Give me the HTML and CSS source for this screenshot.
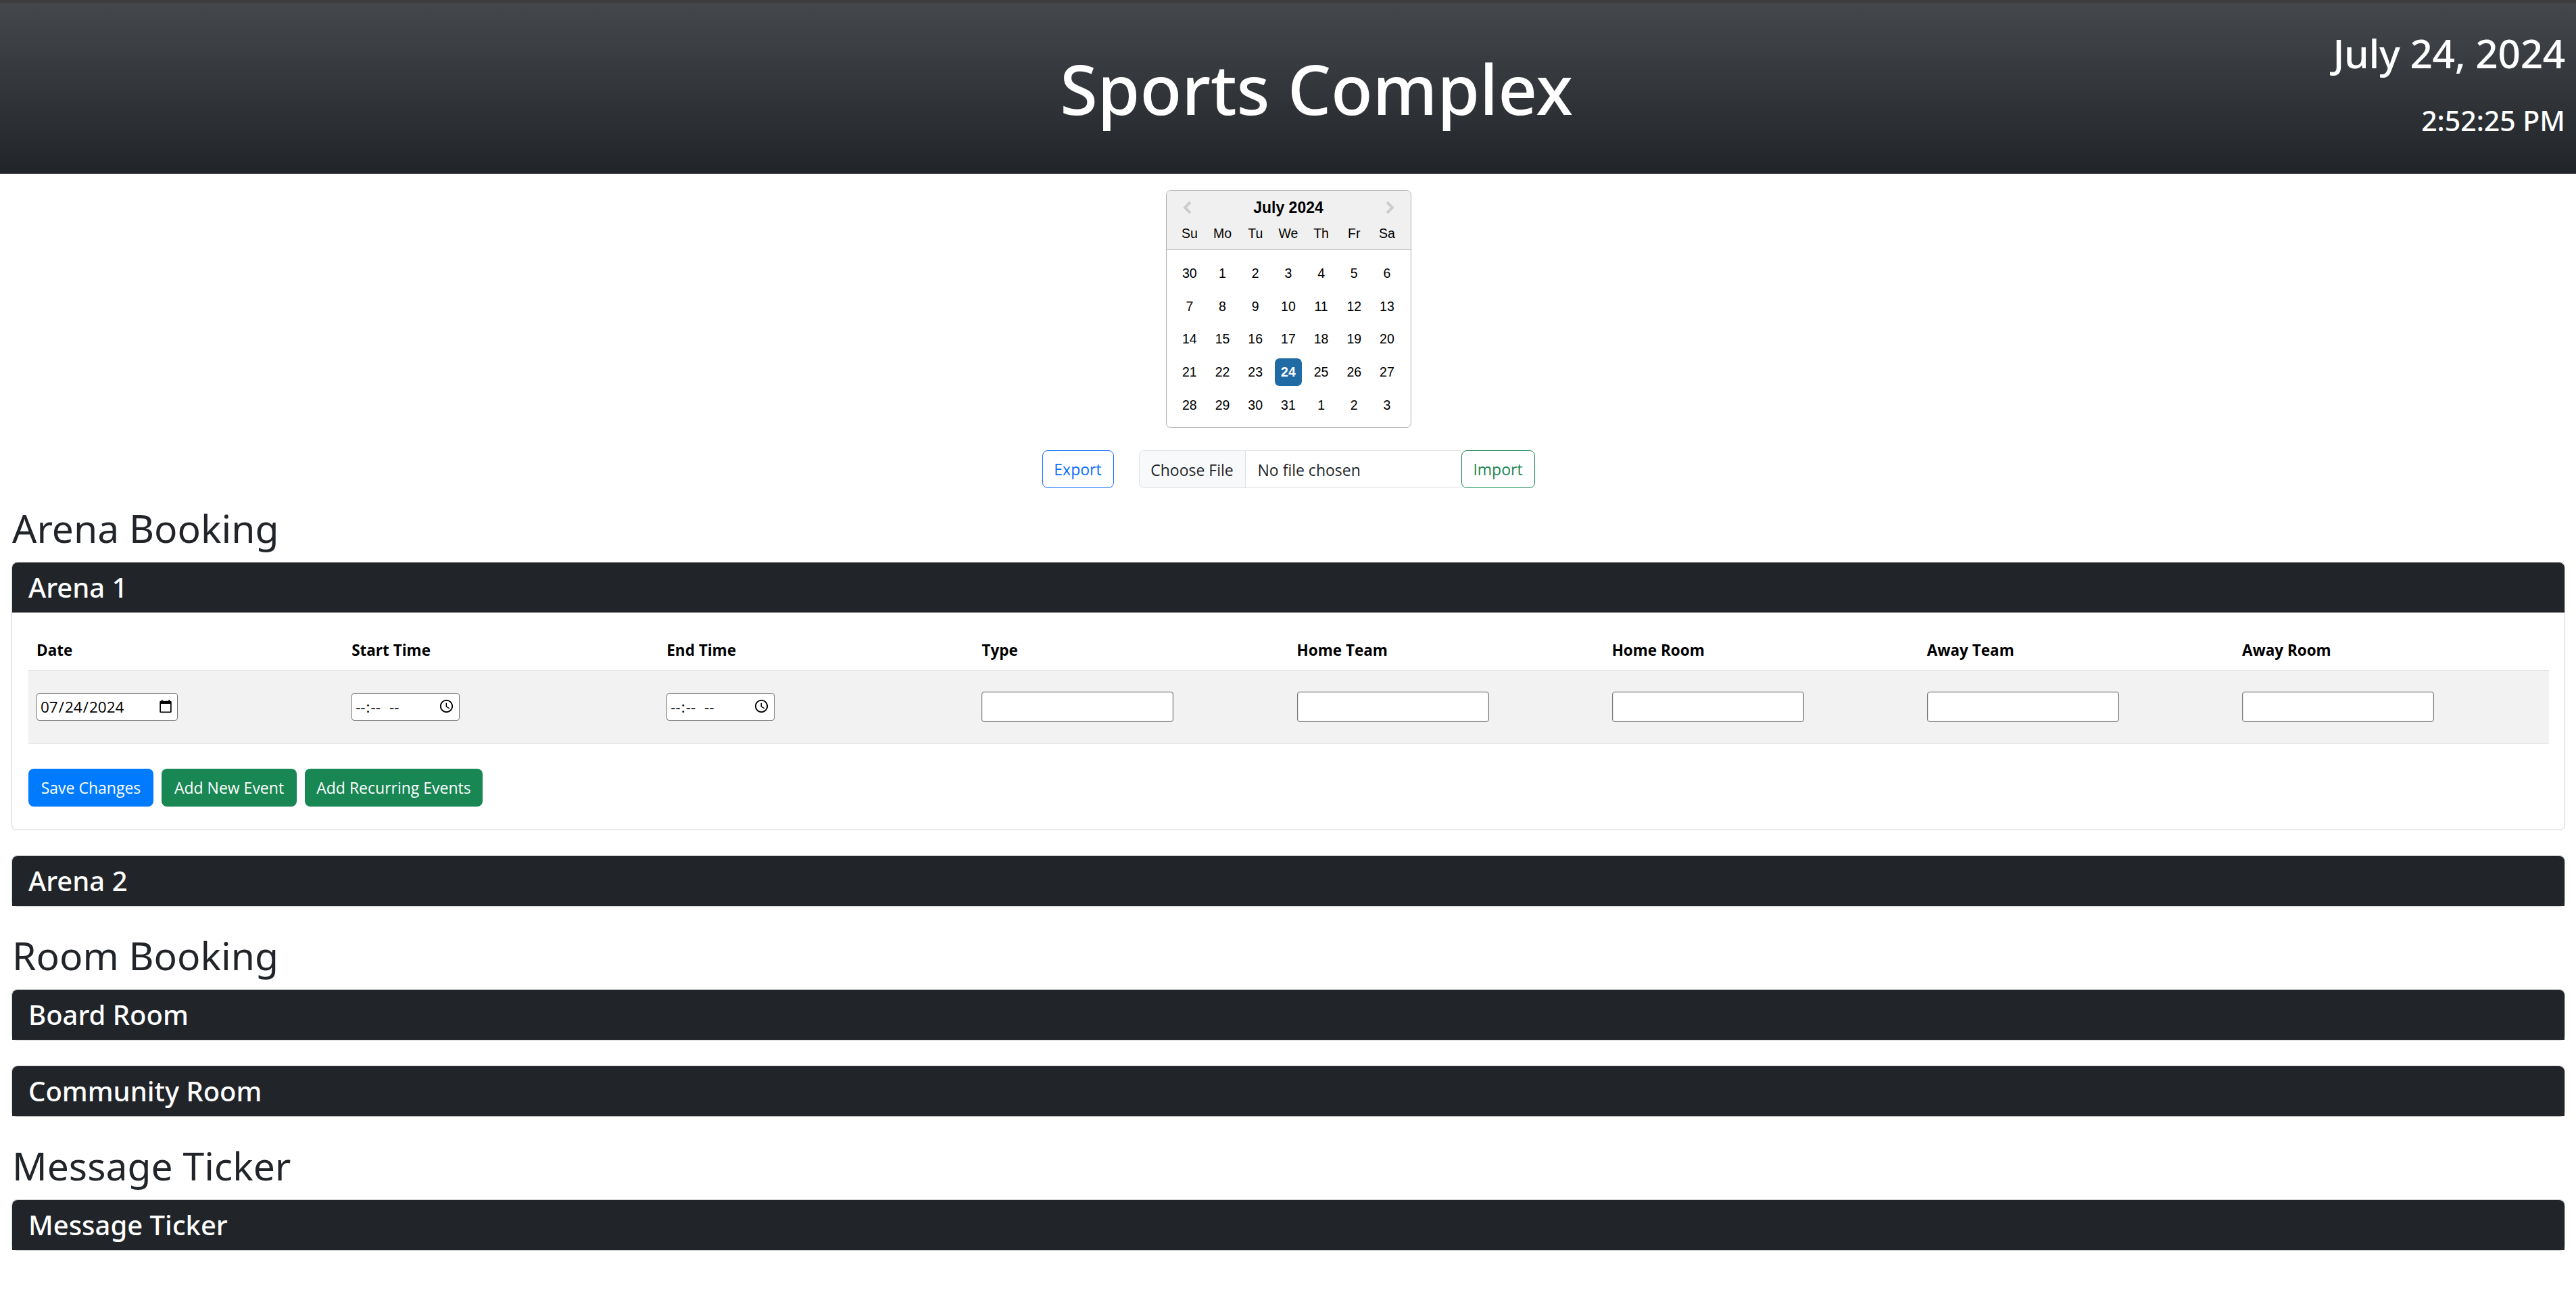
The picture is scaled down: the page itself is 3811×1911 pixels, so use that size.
FILE: index.html
```html
<!DOCTYPE html>
<html>
<head>
	<title>Sports Complex</title>
	<meta charset="utf-8">
	<link rel="stylesheet" href="styles.css">
</head>
<body>
	<header class="banner">
		<h1 class="banner-title">Sports Complex</h1>
		<div class="clock">
			<div class="clock-date">July 24, 2024</div>
			<div class="clock-time">2:52:25 PM</div>
		</div>
	</header>

	<div class="calendar-wrap">
		<div class="calendar">
			<div class="calendar-head">
				<div class="calendar-month">
					<svg class="chevron" viewBox="0 0 14 20"><path d="M11 2 3 10l8 8"/></svg>
					<span>July 2024</span>
					<svg class="chevron" viewBox="0 0 14 20"><path d="M3 2l8 8-8 8"/></svg>
				</div>
				<div class="calendar-row">
					<span>Su</span><span>Mo</span><span>Tu</span><span>We</span><span>Th</span><span>Fr</span><span>Sa</span>
				</div>
			</div>
			<div class="calendar-body">
				<div class="calendar-row"><span>30</span><span>1</span><span>2</span><span>3</span><span>4</span><span>5</span><span>6</span></div>
				<div class="calendar-row"><span>7</span><span>8</span><span>9</span><span>10</span><span>11</span><span>12</span><span>13</span></div>
				<div class="calendar-row"><span>14</span><span>15</span><span>16</span><span>17</span><span>18</span><span>19</span><span>20</span></div>
				<div class="calendar-row"><span>21</span><span>22</span><span>23</span><span class="selected">24</span><span>25</span><span>26</span><span>27</span></div>
				<div class="calendar-row"><span>28</span><span>29</span><span>30</span><span>31</span><span>1</span><span>2</span><span>3</span></div>
			</div>
		</div>
	</div>

	<div class="transfer">
		<button class="btn btn-outline-blue">Export</button>
		<div class="import-group">
			<input class="file-input" type="file">
			<button class="btn btn-outline-green">Import</button>
		</div>
	</div>

	<main class="content">
		<h2 class="section-title">Arena Booking</h2>
		<section class="card">
			<div class="card-header">Arena 1</div>
			<div class="card-body">
				<table class="events">
					<tr>
						<th>Date</th><th>Start Time</th><th>End Time</th><th>Type</th>
						<th>Home Team</th><th>Home Room</th><th>Away Team</th><th>Away Room</th>
					</tr>
					<tr>
						<td><input class="field-date" type="date" value="2024-07-24"></td>
						<td><input class="field-time" type="time"></td>
						<td><input class="field-time" type="time"></td>
						<td><input class="field-text" type="text"></td>
						<td><input class="field-text" type="text"></td>
						<td><input class="field-text" type="text"></td>
						<td><input class="field-text" type="text"></td>
						<td><input class="field-text" type="text"></td>
					</tr>
				</table>
				<div class="actions">
					<button class="btn btn-blue">Save Changes</button>
					<button class="btn btn-green">Add New Event</button>
					<button class="btn btn-green">Add Recurring Events</button>
				</div>
			</div>
		</section>
		<section class="card"><div class="card-header">Arena 2</div></section>

		<h2 class="section-title">Room Booking</h2>
		<section class="card"><div class="card-header">Board Room</div></section>
		<section class="card"><div class="card-header">Community Room</div></section>

		<h2 class="section-title">Message Ticker</h2>
		<section class="card"><div class="card-header">Message Ticker</div></section>
	</main>
</body>
</html>
```

FILE: styles.css
```css
*{
	box-sizing: border-box;
}

body{
	margin: 0;
	font-family: "Open Sans", sans-serif;
	font-size: 24px;
	color: #212529;
	background: #fff;
}

/* top banner */
.banner{
	display: flex;
	align-items: flex-start;
	height: 257px;
	border-top: 5px solid #3d3d3d;
	background: linear-gradient(#44484c, #212529);
	color: #fff;
	font-family: "Noto Sans", sans-serif;
}

.banner-title{
	flex: 1;
	margin: 0;
	padding: 58px 0 0 444px;
	text-align: center;
	font-size: 101px;
	line-height: 1.35;
	font-weight: 500;
}

.clock{
	padding: 38px 16px 0 0;
	text-align: right;
}

.clock-date{
	font-size: 58.5px;
	line-height: 70px;
	font-weight: 500;
	letter-spacing: -0.3px;
}

.clock-time{
	margin-top: 40px;
	font-size: 41px;
	line-height: 50px;
	font-weight: 500;
}

/* month picker */
.calendar-wrap{
	display: flex;
	justify-content: center;
	margin-top: 24px;
	padding-left: 1px;
}

.calendar{
	width: 363px;
	height: 352px;
	border: 1px solid #aeaeae;
	border-radius: 7px;
	font-family: "Liberation Sans", sans-serif;
	font-size: 19.5px;
	color: #000;
}

.calendar-head{
	height: 88px;
	padding: 0 10px;
	background: #f0f0f0;
	border-bottom: 1px solid #aeaeae;
	border-radius: 7px 7px 0 0;
}

.calendar-month{
	display: flex;
	align-items: center;
	justify-content: space-between;
	height: 50px;
	padding: 0 14px;
	font-size: 23px;
	font-weight: bold;
}

.chevron{
	width: 14px;
	height: 20px;
	fill: none;
	stroke: #ccc;
	stroke-width: 4;
}

.calendar-row{
	display: grid;
	grid-template-columns: repeat(7, 48.7px);
	text-align: center;
	line-height: 26px;
}

.calendar-body{
	padding: 10px 10px 0;
}

.calendar-body .calendar-row{
	height: 48.7px;
	align-items: center;
}

.calendar-body span{
	line-height: 41px;
	margin: 0 4px;
}

.calendar-body .selected{
	background: #216ba5;
	border-radius: 7px;
	color: #fff;
	font-weight: bold;
}

/* export and import */
.transfer{
	display: flex;
	justify-content: center;
	gap: 37px;
	margin: 33px 0 0;
	padding-left: 1px;
}

.import-group{
	display: flex;
}

.btn{
	height: 56px;
	padding: 0;
	border: 1px solid transparent;
	border-radius: 8px;
	font-family: "Open Sans", sans-serif;
	font-size: 23px;
	background: none;
}

.btn-outline-blue{
	width: 106px;
	border-color: #0d6efd;
	color: #0d6efd;
}

.btn-outline-green{
	width: 109px;
	margin-left: 1px;
	border-color: #198754;
	color: #198754;
}

.btn-blue{
	background: #007bff;
	color: #fff;
}

.btn-green{
	background: #198754;
	color: #fff;
}

.file-input{
	width: 476px;
	height: 56px;
	padding: 0;
	border: 1px solid #dee2e6;
	border-right: 0;
	border-radius: 8px 0 0 8px;
	font-family: "Open Sans", sans-serif;
	font-size: 23px;
	color: #212529;
}

.file-input::file-selector-button{
	width: 157px;
	height: 56px;
	margin: 0 18px 0 0;
	padding: 0;
	border: 0;
	border-right: 1px solid #dee2e6;
	background: #f8f9fa;
	color: #212529;
	font: inherit;
}

/* booking sections */
.content{
	padding: 0 16px 0 17px;
}

.section-title{
	margin: 0 0 14px;
	padding-left: 1px;
	font-family: "Noto Sans", sans-serif;
	font-size: 57px;
	line-height: 71px;
	font-weight: 400;
}

.section-title:first-child{
	margin-top: 24px;
}

.card{
	margin-bottom: 37px;
	border: 1px solid #d0d0d0;
	border-radius: 8px;
}

.card-header{
	height: 74px;
	padding: 0 24px;
	background: #212529;
	border-radius: 8px 8px 0 0;
	color: #fff;
	font-family: "Noto Sans", sans-serif;
	font-size: 40px;
	line-height: 73px;
	font-weight: 500;
}

.card-body{
	padding: 25px 23px 34px 24px;
}

.events{
	width: 100%;
	border-collapse: collapse;
	table-layout: fixed;
	color: #000;
}

.events th{
	height: 60px;
	padding: 2px 12px 0;
	text-align: left;
	font-size: 22.5px;
	font-weight: bold;
}

.events td{
	height: 108px;
	padding: 0 12px;
	background: #f2f2f2;
	border-top: 1px solid #e2e2e2;
	border-bottom: 1px solid #e2e2e2;
}

.events input{
	display: block;
	background: #fff;
	color: #000;
	font-family: "Open Sans", sans-serif;
}

.field-date, .field-time{
	height: 41px;
	padding: 0 4px;
	border: 1px solid #767676;
	border-radius: 4px;
	font-size: 22.5px;
}

.field-date{
	width: 209px;
}

.field-time{
	width: 160px;
}

.field-time::-webkit-datetime-edit-hour-field,
.field-time::-webkit-datetime-edit-minute-field{
	letter-spacing: 3px;
}

.field-time::-webkit-datetime-edit-ampm-field{
	margin-left: 8px;
	letter-spacing: 3px;
}

.field-text{
	width: 284px;
	height: 45px;
	border: 1px solid #767676;
	border-radius: 4px;
	box-shadow: inset 0 0 0 1px #e4e4e4;
}

.actions{
	display: flex;
	gap: 12px;
	margin-top: 37px;
}

.actions .btn:nth-child(1){
	width: 185px;
}

.actions .btn:nth-child(2){
	width: 200px;
}

.actions .btn:nth-child(3){
	width: 263px;
}
```
